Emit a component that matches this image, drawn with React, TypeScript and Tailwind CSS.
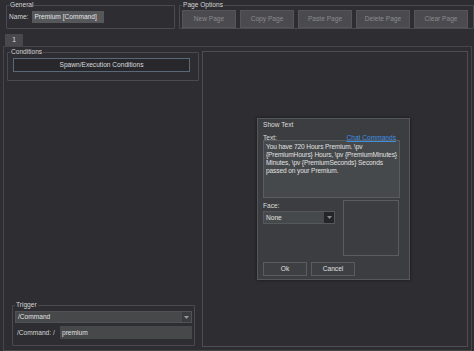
const Group = ({
  title,
  className,
  children,
}: {
  title: string;
  className?: string;
  children?: React.ReactNode;
}) => (
  <fieldset className={`border border-[#4a4a50] rounded-[1px] ${className ?? ""}`}>
    <legend className="ml-[2px] px-[1px] text-[6.6px] leading-[8px] text-[#d6d6d6]">{title}</legend>
    {children}
  </fieldset>
);

const PageButton = ({ label }: { label: string }) => (
  <div className="flex items-center justify-center w-[54px] h-[18px] bg-[#4b4b4f] border border-[#55555a] text-[6.6px] text-[#8a8a8e]">
    {label}
  </div>
);

const ShowText = () => (
  <div className="relative w-[153px] h-[162px] bg-[#3b3d40] border border-[#55585b] shadow-[0_0_3px_rgba(0,0,0,0.5)] px-[5px]">
    <div className="pt-[2px] text-[6.6px] leading-[8px] text-[#dcdcdc]">Show Text</div>
    <div className="flex justify-between items-end mt-[5px] pr-[8px] text-[6.6px] leading-[8px]">
      <span className="text-[#dcdcdc]">Text:</span>
      <span className="text-[#3f8fe0] underline">Chat Commands</span>
    </div>
    <div className="mt-[-2px] w-[137px] h-[58px] bg-[#46494b] border border-[#5a5d60] px-[2px] pt-[2px] text-[6.6px] leading-[8px] tracking-[-0.12px] text-[#e0e0e0] whitespace-nowrap overflow-hidden">
      <div>You have 720 Hours Premium. \pv</div>
      <div>{"{PremiumHours} Hours, \\pv {PremiumMinutes}"}</div>
      <div>{"Minutes, \\pv {PremiumSeconds} Seconds"}</div>
      <div>passed on your Premium.</div>
    </div>
    <div className="flex mt-[4px] gap-[8px]">
      <div className="flex flex-col w-[72px]">
        <span className="text-[6.6px] leading-[8px] text-[#dcdcdc]">Face:</span>
        <div className="mt-[1px] flex h-[13px] bg-[#46494b] border border-[#55585b]">
          <span className="flex-1 pl-[2px] text-[6.6px] leading-[11px] text-[#e0e0e0]">None</span>
          <div className="flex items-center justify-center w-[10px] bg-[#242528]">
            <svg width="5" height="3" viewBox="0 0 5 3">
              <path d="M0 0h5L2.5 3z" fill="#8a8a8a" />
            </svg>
          </div>
        </div>
      </div>
      <div className="mt-[-2px] w-[56px] h-[56px] border border-[#5a5d60]" />
    </div>
    <div className="flex gap-[4px] mt-[6px]">
      <div className="flex items-center justify-center w-[44px] h-[14px] bg-[#3d3f42] border border-[#5a5d60] text-[6.6px] text-[#e0e0e0]">
        Ok
      </div>
      <div className="flex items-center justify-center w-[44px] h-[14px] bg-[#3d3f42] border border-[#5a5d60] text-[6.6px] text-[#e0e0e0]">
        Cancel
      </div>
    </div>
  </div>
);

export default function App() {
  return (
    <div
      className="w-[474px] h-[351px] bg-[#2d2d32] overflow-hidden text-[#d6d6d6]"
      style={{ fontFamily: '"Liberation Sans", Arial, sans-serif' }}
    >
      <div className="flex pt-[1px] gap-[4px]">
        <Group title="General" className="ml-[6px] w-[169px] h-[28px]">
          <div className="flex items-center gap-[4px] pl-[2px] pt-[2px]">
            <span className="text-[6.6px] text-[#d6d6d6]">Name:</span>
            <div className="w-[72px] h-[12px] bg-[#56575b] px-[2px] text-[6.6px] leading-[12px] text-[#e4e4e4]">
              Premium [Command]
            </div>
          </div>
        </Group>
        <Group title="Page Options" className="w-[295px] h-[28px]">
          <div className="flex gap-[4px] pl-[2px] pt-[1px]">
            <PageButton label="New Page" />
            <PageButton label="Copy Page" />
            <PageButton label="Paste Page" />
            <PageButton label="Delete Page" />
            <PageButton label="Clear Page" />
          </div>
        </Group>
      </div>

      <div className="mt-[5px] ml-[5px] flex">
        <div className="flex items-center justify-center w-[18px] h-[12px] bg-[#48484d] text-[6.6px] text-[#e0e0e0]">
          1
        </div>
      </div>

      <div className="ml-[3px] w-[469px] h-[305px] border border-[#45454a] flex">
        <div className="w-[198px] flex flex-col justify-between pb-[4px]">
          <Group title="Conditions" className="ml-[3px] mt-[1px] w-[192px] h-[33px]">
            <div className="ml-[5px] mr-[8px] mt-[2px] flex items-center justify-center h-[14px] bg-[#27272c] border border-[#5b6878] text-[6.6px] text-[#dcdcdc]">
              Spawn/Execution Conditions
            </div>
          </Group>
          <Group title="Trigger" className="ml-[8px] w-[183px] h-[45px]">
            <div className="flex flex-col gap-[3px] px-[2px] pt-[2px]">
              <div className="flex h-[12px] bg-[#46484a] border border-[#505255]">
                <span className="flex-1 pl-[2px] text-[6.6px] leading-[10px] text-[#e0e0e0]">/Command</span>
                <div className="flex items-center justify-center w-[9px] bg-[#3a3b3e]">
                  <svg width="5" height="3" viewBox="0 0 5 3">
                    <path d="M0 0h5L2.5 3z" fill="#9a9a9a" />
                  </svg>
                </div>
              </div>
              <div className="flex items-center">
                <span className="w-[45px] pl-[2px] text-[6.6px] text-[#d6d6d6]">/Command: /</span>
                <div className="flex-1 h-[13px] bg-[#46484a] px-[2px] text-[6.6px] leading-[13px] text-[#e0e0e0]">
                  premium
                </div>
              </div>
            </div>
          </Group>
        </div>
        <div className="mt-[4px] w-[266px] h-[296px] border border-[#4d4d52] flex items-center justify-center pr-[3px]">
          <ShowText />
        </div>
      </div>
    </div>
  );
}
